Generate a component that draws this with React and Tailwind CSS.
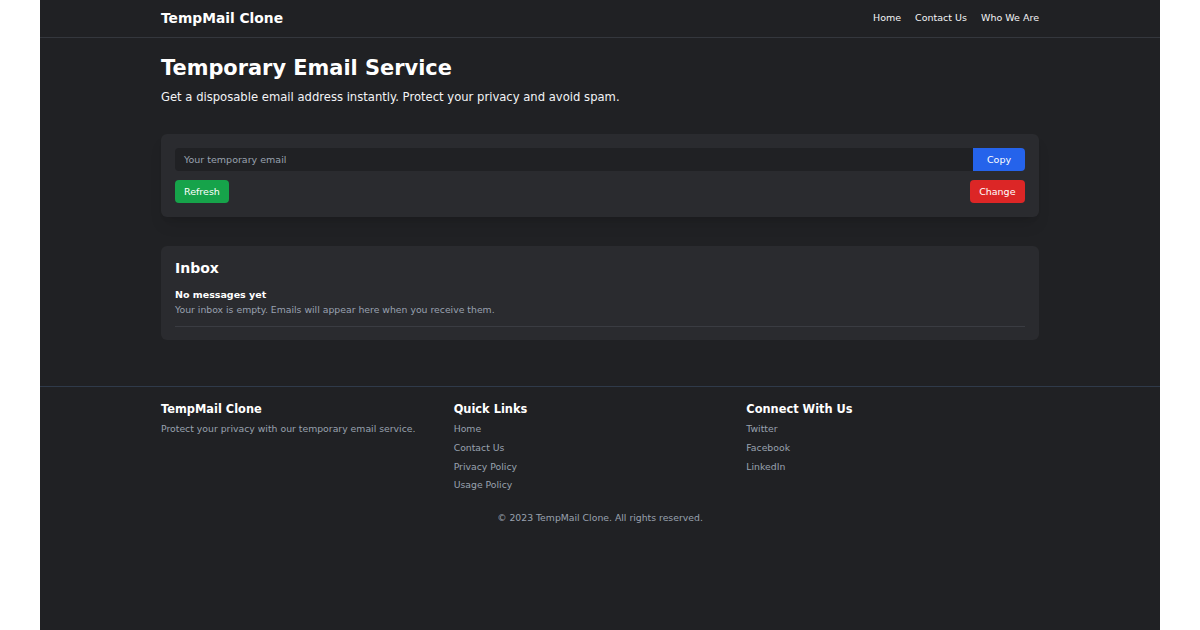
import React from 'react';

const quickLinks = ['Home', 'Contact Us', 'Privacy Policy', 'Usage Policy'];
const socialLinks = ['Twitter', 'Facebook', 'LinkedIn'];

export default function App() {
  return (
    <div className="min-h-screen bg-white" style={{ fontFamily: '"DejaVu Sans", sans-serif' }}>
      <div className="mx-auto w-[1120px] min-h-[630px] bg-[#202124] text-white">
        {/* Header */}
        <header className="border-b border-[#34373d]">
          <div className="mx-auto w-[878px] h-[37px] flex items-center justify-between">
            <span className="font-bold text-[13.8px]">TempMail Clone</span>
            <nav className="flex items-center gap-[14px] text-[9.5px] text-gray-100">
              <a>Home</a>
              <a>Contact Us</a>
              <a>Who We Are</a>
            </nav>
          </div>
        </header>

        <main className="mx-auto w-[878px] pt-[17px] pb-[46px]">
          <h1 className="font-bold text-[20.9px] leading-[26px]">Temporary Email Service</h1>
          <p className="mt-[8px] text-[11.6px] text-gray-100">
            Get a disposable email address instantly. Protect your privacy and avoid spam.
          </p>

          {/* Email card */}
          <div className="mt-[28px] bg-[#2a2b2f] rounded-md px-[14px] pt-[14px] pb-[14px] shadow-lg">
            <div className="flex h-[23px]">
              <div className="flex-1 bg-[#202124] rounded-l flex items-center px-[9px] text-[9.5px] text-gray-400">
                Your temporary email
              </div>
              <button className="w-[52px] bg-[#2563eb] rounded-r text-[9.5px] text-white">Copy</button>
            </div>
            <div className="mt-[9px] flex justify-between">
              <button className="h-[23px] px-[9px] bg-[#16a34a] rounded text-[9.5px] text-white">Refresh</button>
              <button className="h-[23px] px-[9.5px] bg-[#dc2626] rounded text-[9.5px] text-white">Change</button>
            </div>
          </div>

          {/* Inbox */}
          <div className="mt-[29px] bg-[#2a2b2f] rounded-md px-[14px] pt-[13px] pb-[13px]">
            <h2 className="font-bold text-[14px] leading-[18px]">Inbox</h2>
            <div className="mt-[11px] pb-[10px] border-b border-[#3a3c42]">
              <p className="font-bold text-[9.5px] leading-[13px]">No messages yet</p>
              <p className="mt-[2px] text-[9.3px] leading-[13px] text-gray-400">
                Your inbox is empty. Emails will appear here when you receive them.
              </p>
            </div>
          </div>
        </main>

        {/* Footer */}
        <footer className="border-t border-[#2f3a4a]">
          <div className="mx-auto w-[878px] pt-[14px] pb-[40px]">
            <div className="grid grid-cols-3">
              <div>
                <h3 className="font-bold text-[11.4px] leading-[16px]">TempMail Clone</h3>
                <p className="mt-[5px] text-[9.3px] text-gray-400">Protect your privacy with our temporary email service.</p>
              </div>
              <div>
                <h3 className="font-bold text-[11.4px] leading-[16px]">Quick Links</h3>
                <ul className="mt-[5px] flex flex-col gap-[5.7px] text-[9.3px] text-gray-400">
                  {quickLinks.map((l) => (
                    <li key={l} className="leading-[13px]">{l}</li>
                  ))}
                </ul>
              </div>
              <div>
                <h3 className="font-bold text-[11.4px] leading-[16px]">Connect With Us</h3>
                <ul className="mt-[5px] flex flex-col gap-[5.7px] text-[9.3px] text-gray-400">
                  {socialLinks.map((l) => (
                    <li key={l} className="leading-[13px]">{l}</li>
                  ))}
                </ul>
              </div>
            </div>
            <p className="mt-[20px] text-center text-[9.3px] text-gray-400">© 2023 TempMail Clone. All rights reserved.</p>
          </div>
        </footer>
      </div>
    </div>
  );
}
